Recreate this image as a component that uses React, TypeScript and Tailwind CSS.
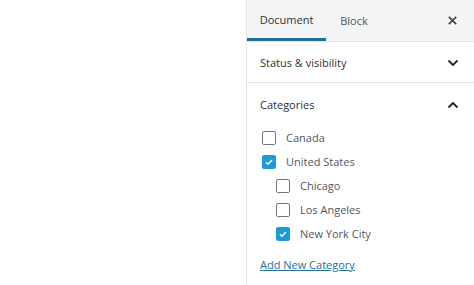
import React from "react";

type Cat = { name: string; checked: boolean; nested?: boolean };

const cats: Cat[] = [
  { name: "Canada", checked: false },
  { name: "United States", checked: true },
  { name: "Chicago", checked: false, nested: true },
  { name: "Los Angeles", checked: false, nested: true },
  { name: "New York City", checked: true, nested: true },
];

function Box({ checked }: { checked: boolean }) {
  if (checked) {
    return (
      <span className="flex h-[14px] w-[14px] items-center justify-center rounded-[2px] bg-[#1e9ad6]">
        <svg width="10" height="10" viewBox="0 0 12 12" fill="none">
          <path d="M2.3 6.2l2.5 2.5 4.8-5.2" stroke="#fff" strokeWidth="1.7" />
        </svg>
      </span>
    );
  }
  return (
    <span className="h-[14px] w-[14px] rounded-[2px] border-[1.5px] border-[#6c7781] bg-white" />
  );
}

export default function App() {
  return (
    <div
      className="flex h-[285px] w-[474px] bg-white text-[11px] text-[#2c3338]"
      style={{ fontFamily: '"Open Sans", sans-serif' }}
    >
      <div className="w-[246px]" />
      <div className="flex flex-1 flex-col border-l border-[#e2e4e7]">
        <div className="flex h-[42px] items-stretch border-b border-[#e2e4e7] bg-[#f3f4f5]">
          <div className="flex w-[79px] items-center justify-center border-b-[3px] border-[#1f6f9a] pt-[3px]">
            Document
          </div>
          <div className="flex w-[56px] items-center justify-center pt-[1px] text-[#50575e]">
            Block
          </div>
          <div className="ml-auto flex w-[44px] items-center justify-center">
            <svg width="11" height="11" viewBox="0 0 12 12">
              <path d="M2 2l8 8M10 2l-8 8" stroke="#444" strokeWidth="1.8" />
            </svg>
          </div>
        </div>
        <div className="flex h-[41px] items-center justify-between border-b border-[#e2e4e7] pl-[13px] pr-[15px] pt-[2px]">
          <span>Status &amp; visibility</span>
          <svg width="12" height="8" viewBox="0 0 12 8">
            <path d="M1.5 1.5l4.5 4.5 4.5-4.5" stroke="#222" strokeWidth="1.8" fill="none" />
          </svg>
        </div>
        <div className="flex h-[42px] items-center justify-between pl-[13px] pr-[15px] pt-[2px]">
          <span>Categories</span>
          <svg width="12" height="8" viewBox="0 0 12 8">
            <path d="M1.5 6.5l4.5-4.5 4.5 4.5" stroke="#222" strokeWidth="1.8" fill="none" />
          </svg>
        </div>
        <div className="flex flex-col pl-[15px] pt-[1px] text-[#50575e]">
          {cats.map((c) => (
            <div
              key={c.name}
              className={`flex h-[24px] items-center gap-[10px] ${c.nested ? "pl-[14px]" : ""}`}
            >
              <Box checked={c.checked} />
              <span>{c.name}</span>
            </div>
          ))}
        </div>
        <a className="ml-[13px] mt-[11px] w-fit text-[#2271a1] underline" href="#">
          Add New Category
        </a>
      </div>
    </div>
  );
}
